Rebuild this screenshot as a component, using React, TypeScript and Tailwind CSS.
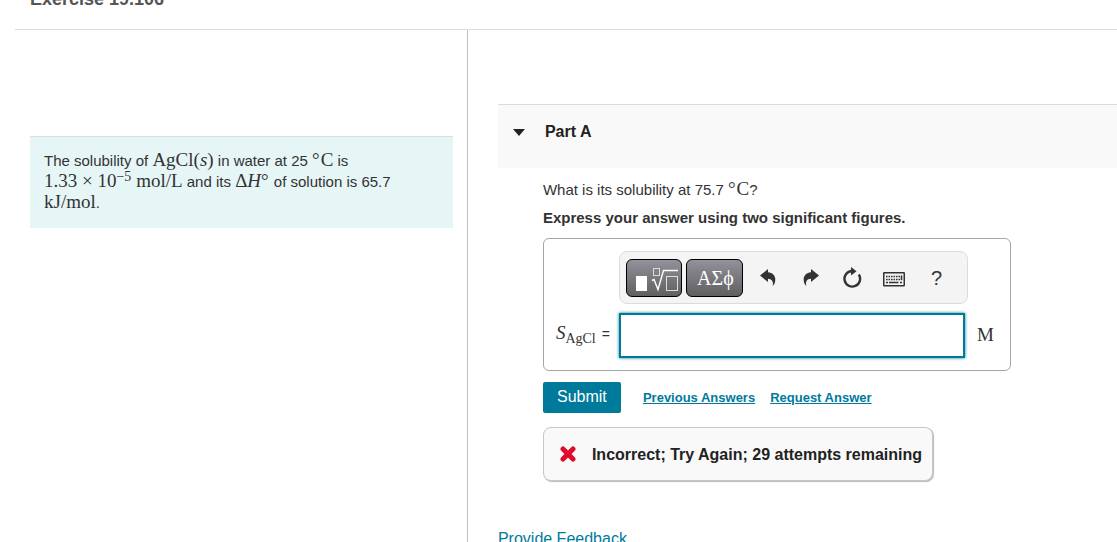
import { useState, type ReactNode } from "react";

const Tex = ({ children }: { children: ReactNode }) => (
  <span className="font-['Liberation_Serif',serif] text-[19px] leading-none">{children}</span>
);

const Degree = () => <span className="mr-px">°</span>;

function TemplatesIcon() {
  return (
    <svg width="44" height="28" viewBox="0 0 44 28" fill="none" stroke="#fff" aria-hidden="true">
      <rect x="1" y="12" width="11" height="15" fill="#fff" stroke="none" />
      <rect x="18.500" y="4.500" width="6" height="7" stroke="#ddd" />
      <path d="M17 16.500L19 15.500L23 25.500L28.500 6.500H43" strokeWidth="1.400" />
      <rect x="31.500" y="12.500" width="11" height="14" stroke="#ddd" />
    </svg>
  );
}

function UndoIcon({ flip = false }: { flip?: boolean }) {
  return (
    <svg width="16" height="18" viewBox="0 0 16 18" fill="#333" className={flip ? "-scale-x-100" : ""} aria-hidden="true">
      <path d="M0 6.500L8 0V3.300C12.500 3.700 15.500 6.500 15.300 11C15.200 13.500 14.300 15.500 12.700 17.200C13.600 12.500 12.300 9.900 8 9.700V13Z" />
    </svg>
  );
}

function ResetIcon() {
  return (
    <svg width="20" height="21" viewBox="0 0 20 21" fill="none" aria-hidden="true">
      <path d="M11 4H10A7.800 7.800 0 1 0 16.800 7.500" stroke="#333" strokeWidth="2.400" />
      <path d="M9 0L14.500 4.300L9 8.500Z" fill="#333" />
    </svg>
  );
}

function KeyboardIcon() {
  return (
    <svg width="22" height="15" viewBox="0 0 22 15" fill="none" stroke="#333" aria-hidden="true">
      <rect x="0.750" y="0.750" width="20.500" height="13" rx="0.500" strokeWidth="1.500" />
      <path d="M3 4.500H19M3 7.500H19" strokeWidth="1.500" strokeDasharray="1.600 0.900" />
      <path d="M3 10.500H5M6 10.500H15.500M17 10.500H19M18.500 3.500V8" strokeWidth="1.500" />
    </svg>
  );
}

function AnswerBox() {
  const [answer, setAnswer] = useState("");

  return (
    <div className="flex max-w-[468px] rounded-md border border-[#a5a5a5] py-3 pr-[15px] pl-3">
      <label htmlFor="answer" className="w-[63px] shrink-0 pt-[72px] text-sm whitespace-nowrap">
        <Tex>
          <i>S</i>
        </Tex>
        <sub className="relative top-1 align-baseline font-['Liberation_Serif',serif] text-sm leading-none">AgCl</sub>
        <span className="ml-1.5">=</span>
      </label>
      <div className="min-w-0 flex-1">
        <div className="flex h-[53px] items-center rounded-lg border border-[#dcdcdc] bg-[#f4f4f4] pl-1.5">
          <button aria-label="Templates" className="flex h-[38px] w-[56px] items-center justify-center rounded-md border border-black bg-linear-to-b from-[#93919a] to-[#606062] pl-1.5">
            <TemplatesIcon />
          </button>
          <button aria-label="Symbols" className="ml-1 h-[38px] w-[57px] rounded-md border border-black bg-linear-to-b from-[#93919a] to-[#606062] pl-0.5 font-['Liberation_Serif',serif] text-xl text-white">
            ΑΣϕ
          </button>
          <button aria-label="Undo" className="ml-[17px]"><UndoIcon /></button>
          <button aria-label="Redo" className="ml-[27px]"><UndoIcon flip /></button>
          <button aria-label="Reset" className="ml-[23px]"><ResetIcon /></button>
          <button aria-label="Keyboard shortcuts" className="mt-1 ml-[21px]"><KeyboardIcon /></button>
          <button aria-label="Help" className="ml-[26px] text-xl text-[#333]">?</button>
        </div>
        <div className="mt-[9px] mr-[3px]">
          <input
            id="answer"
            value={answer}
            onChange={(e) => setAnswer(e.target.value)}
            className="block h-[45px] w-full border-2 border-[#007a9b] bg-white px-2 text-lg shadow-[0_0_3px_#007a9b] outline-none"
          />
        </div>
      </div>
      <span className="ml-[9px] w-[18px] pt-[74px]"><Tex>M</Tex></span>
    </div>
  );
}

function Problem() {
  return (
    <p className="border-t border-[#d9dfdf] bg-[#e6f6f6] px-3.5 pt-[13px] pb-[15px] text-[15px] leading-[21px] text-[#333]">
      The solubility of <Tex>AgCl(<i>s</i>)</Tex> in water at 25 <Tex><Degree />C</Tex> is
      <br />
      <Tex>1.33 × 10<sup className="relative -top-1.5 align-baseline text-sm leading-none">−5</sup> mol/L</Tex> and its{" "}
      <Tex>Δ<i>H</i><Degree /></Tex> of solution is 65.7
      <br />
      <Tex>kJ/mol</Tex>.
    </p>
  );
}

export default function App() {
  const [open, setOpen] = useState(true);

  return (
    <div className="flex h-screen flex-col overflow-hidden bg-white pl-[15px] font-['Liberation_Sans',Arial,sans-serif] text-[#333]">
      <header className="shrink-0 border-b border-[#dcdcdc] pl-[15px]">
        <h1 className="-mt-[11px] mb-5 text-lg leading-5 font-bold text-[#555]">Exercise 19.106</h1>
      </header>
      <div className="flex min-h-0 flex-1">
        <aside className="w-[41.1%] shrink-0 border-r border-[#b8c4cc] pt-[106px] pr-3.5 pl-[15px]">
          <Problem />
        </aside>
        <main className="min-w-0 flex-1 pt-[74px] pl-[30px]">
          <section>
            <h2 className="border-t border-[#dcdcdc] bg-[#f9f9f9]">
              <button
                aria-expanded={open}
                onClick={() => setOpen(!open)}
                className="flex h-[63px] w-full items-center pb-[9px] pl-[15px] text-base font-bold text-[#222]"
              >
                <svg width="12" height="7" viewBox="0 0 12 7" fill="#222" aria-hidden="true">
                  <path d="M0 0H12L6 7Z" />
                </svg>
                <span className="ml-5">Part A</span>
              </button>
            </h2>
            {open && (
              <div className="pt-[11px] pl-[45px] text-[15px]">
                <p className="leading-5">
                  What is its solubility at 75.7 <Tex><Degree />C</Tex>?
                </p>
                <p className="mt-2 mb-2.5 leading-5 font-bold">Express your answer using two significant figures.</p>
                <AnswerBox />
                <div className="mt-[11px] flex items-center text-[13px] font-bold text-[#007a9b]">
                  <button className="h-[31px] w-[78px] rounded-xs bg-[#007a9b] pb-0.5 text-base font-normal text-white">Submit</button>
                  <a href="#previous" className="ml-[22px] underline">Previous Answers</a>
                  <a href="#request" className="ml-[15px] underline">Request Answer</a>
                </div>
                <div className="mt-3.5 flex h-[54px] w-fit items-center rounded-lg border border-[#c6c6c6] bg-[#f9f9f9] pr-2.5 pl-4 text-base font-bold text-[#222] shadow-[1px_1px_1px_#bbb]">
                  <svg width="16" height="16" viewBox="0 0 16 16" stroke="#e00a2c" strokeWidth="5" strokeLinecap="round" aria-hidden="true">
                    <path d="M3 3L13 13M13 3L3 13" />
                  </svg>
                  <span className="pt-0.5 pl-4">Incorrect; Try Again; 29 attempts remaining</span>
                </div>
              </div>
            )}
          </section>
          <a href="#feedback" className="mt-[46px] block text-base text-[#007a9b]">Provide Feedback</a>
        </main>
      </div>
    </div>
  );
}
